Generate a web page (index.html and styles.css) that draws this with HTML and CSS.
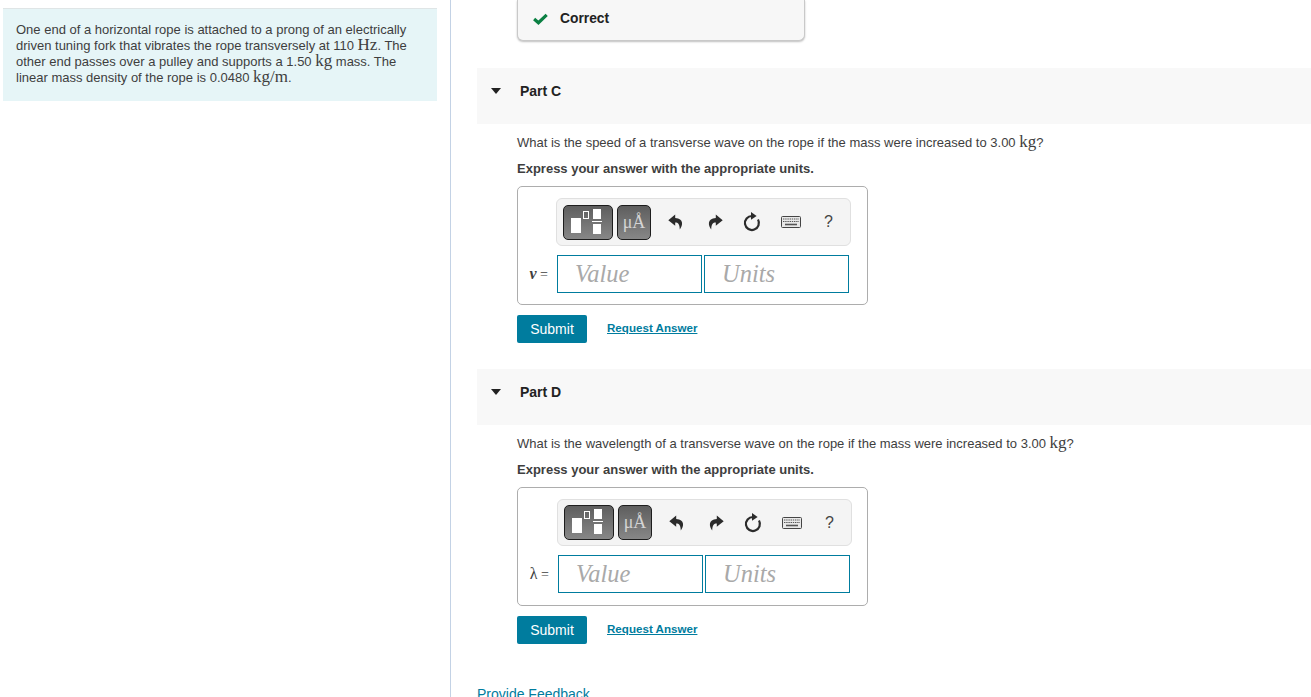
FILE: index.html
```html
<!DOCTYPE html>
<html lang="en">

<head>
    <meta charset="UTF-8">
    <title>Tuning Fork Rope</title>
    <link rel="stylesheet" href="styles.css">
</head>

<body>
    <svg class="icon-defs" width="0" height="0">
        <symbol id="ico-undo" viewBox="0 0 16 16">
            <path d="M7.2 0.5 L0.3 6.3 L7.2 11.8 V8.6 C10.2 8.6 11.6 10.2 11.8 15.5 C15 11.5 16 4.4 7.2 4 Z" />
        </symbol>
        <symbol id="ico-reset" viewBox="0 0 18 20">
            <path d="M9 4 A7 7 0 1 0 15 7.5" fill="none" stroke="#2b2b2b" stroke-width="2.2" />
            <path d="M8 0 L13.6 3.9 L8 7.8 Z" fill="#2b2b2b" />
        </symbol>
        <symbol id="ico-keyboard" viewBox="0 0 20 12">
            <rect x="0.5" y="0.5" width="19" height="11" rx="1" fill="#e8e8e8" stroke="#444" />
            <path d="M2 3h16M2 5.5h16" stroke="#555" stroke-width="1.2" stroke-dasharray="1.4 .8" />
            <path d="M4 8.5h12" stroke="#555" stroke-width="1.6" />
        </symbol>
    </svg>

    <div class="page">
        <aside class="intro-col">
            <div class="intro">
                One end of a horizontal rope is attached to a prong of an electrically<br>
                driven tuning fork that vibrates the rope transversely at 110 <span class="math">Hz</span>. The<br>
                other end passes over a pulley and supports a 1.50 <span class="math">kg</span> mass. The<br>
                linear mass density of the rope is 0.0480 <span class="math">kg/m</span>.
            </div>
        </aside>

        <main class="parts-col">
            <div class="correct-box">
                <svg class="check" viewBox="0 0 16 12" width="15" height="12">
                    <path d="M1.2 6 L5.8 10 L14.6 1.6" fill="none" stroke="#0b8043" stroke-width="3.4" />
                </svg>
                <span>Correct</span>
            </div>

            <section class="part part-c">
                <header class="part-head">
                    <span class="caret"></span>
                    <h2>Part C</h2>
                </header>
                <div class="part-body">
                    <p class="question">What is the speed of a transverse wave on the rope if the mass were increased to 3.00 <span class="math">kg</span>?</p>
                    <p class="hint">Express your answer with the appropriate units.</p>
                    <div class="answer-box">
                        <div class="toolbar">
                            <button class="tool-btn tool-templates" type="button">
                                <span class="sq-big"></span><span class="sq-small"></span>
                                <span class="frac"><i></i><b></b><i></i></span>
                            </button>
                            <button class="tool-btn tool-units" type="button">μÅ</button>
                            <svg class="ico ico-undo"><use href="#ico-undo" /></svg>
                            <svg class="ico ico-redo"><use href="#ico-undo" /></svg>
                            <svg class="ico-reset"><use href="#ico-reset" /></svg>
                            <svg class="ico-keyboard"><use href="#ico-keyboard" /></svg>
                            <span class="help">?</span>
                        </div>
                        <div class="inputs">
                            <label class="var-label"><em>v</em> =</label>
                            <input class="field" type="text" placeholder="Value">
                            <input class="field" type="text" placeholder="Units">
                        </div>
                    </div>
                    <div class="actions">
                        <button class="submit" type="button">Submit</button>
                        <a class="request" href="#">Request Answer</a>
                    </div>
                </div>
            </section>

            <section class="part part-d">
                <header class="part-head">
                    <span class="caret"></span>
                    <h2>Part D</h2>
                </header>
                <div class="part-body">
                    <p class="question">What is the wavelength of a transverse wave on the rope if the mass were increased to 3.00 <span class="math">kg</span>?</p>
                    <p class="hint">Express your answer with the appropriate units.</p>
                    <div class="answer-box">
                        <div class="toolbar">
                            <button class="tool-btn tool-templates" type="button">
                                <span class="sq-big"></span><span class="sq-small"></span>
                                <span class="frac"><i></i><b></b><i></i></span>
                            </button>
                            <button class="tool-btn tool-units" type="button">μÅ</button>
                            <svg class="ico ico-undo"><use href="#ico-undo" /></svg>
                            <svg class="ico ico-redo"><use href="#ico-undo" /></svg>
                            <svg class="ico-reset"><use href="#ico-reset" /></svg>
                            <svg class="ico-keyboard"><use href="#ico-keyboard" /></svg>
                            <span class="help">?</span>
                        </div>
                        <div class="inputs">
                            <label class="var-label"><em class="lambda">λ</em> =</label>
                            <input class="field" type="text" placeholder="Value">
                            <input class="field" type="text" placeholder="Units">
                        </div>
                    </div>
                    <div class="actions">
                        <button class="submit" type="button">Submit</button>
                        <a class="request" href="#">Request Answer</a>
                    </div>
                </div>
            </section>

            <a class="feedback" href="#">Provide Feedback</a>
        </main>
    </div>
</body>

</html>
```

FILE: styles.css
```css
* {
    box-sizing: border-box;
}

html,
body {
    margin: 0;
    height: 697px;
    overflow: hidden;
    background-color: white;
}

body {
    font-family: "Liberation Sans", Arial, sans-serif;
    font-size: 13px;
    color: #3e3e3e;
}

.icon-defs {
    display: block;
    height: 0;
}

.page {
    display: flex;
    height: 697px;
}

.math {
    font-family: "Liberation Serif", serif;
    font-size: 17px;
    line-height: 0;
}

/* left column */
.intro-col {
    width: 451px;
    flex-shrink: 0;
    height: 697px;
    padding: 8px 13px 0 3px;
    border-right: 1px solid #c3d2e5;
}

.intro {
    height: 93px;
    padding: 13px 13px 0;
    background-color: #e6f5f7;
    border-top: 1px solid #dfe5e6;
    line-height: 16px;
    white-space: nowrap;
}

/* right column */
.parts-col {
    flex: 1;
    min-width: 0;
    padding-left: 26px;
}

.correct-box {
    display: flex;
    align-items: center;
    gap: 12px;
    width: 288px;
    height: 41px;
    margin-left: 40px;
    margin-bottom: 27px;
    padding: 0 0 3px 15px;
    background-color: #f7f7f7;
    border: 1px solid #c9c9c9;
    border-top: none;
    border-radius: 0 0 6px 6px;
    box-shadow: 0 1px 2px rgba(0, 0, 0, 0.25);
    font-size: 13.8px;
    font-weight: bold;
    color: #222;
}

.part-head {
    display: flex;
    align-items: center;
    height: 56px;
    padding: 0 0 10px 14px;
    background-color: #f8f8f8;
}

.caret {
    width: 0;
    height: 0;
    border-left: 5.5px solid transparent;
    border-right: 5.5px solid transparent;
    border-top: 6px solid #222;
}

.part-head h2 {
    margin: 0 0 0 19px;
    font-size: 14px;
    font-weight: bold;
    color: #222;
}

.part-body {
    padding: 10px 0 0 40px;
}

.question {
    margin: 0;
    height: 26px;
    line-height: 17px;
}

.hint {
    margin: 0 0 9px;
    height: 17px;
    line-height: 17px;
    font-weight: bold;
}

.answer-box {
    width: 351px;
    height: 119px;
    padding: 11px 16px 0 38px;
    border: 1px solid #adadad;
    border-radius: 5px;
}

.toolbar {
    display: flex;
    align-items: center;
    width: 295px;
    height: 48px;
    padding: 0 0 0 6px;
    background-color: #f4f4f4;
    border: 1px solid #e0e0e0;
    border-radius: 6px;
}

.tool-btn {
    position: relative;
    height: 35px;
    padding: 0;
    background: linear-gradient(#5e5e5e, #878787);
    border: 1px solid #1d1d1d;
    border-radius: 5px;
}

.tool-templates {
    width: 50px;
    margin-right: 4px;
}

.tool-units {
    width: 34px;
    margin-right: 17px;
    font-family: "Liberation Serif", serif;
    font-size: 18px;
    color: #d4d4d4;
}

.sq-big,
.sq-small,
.frac {
    position: absolute;
}

.sq-big {
    left: 7px;
    top: 12px;
    width: 10px;
    height: 15px;
    background-color: white;
}

.sq-small {
    left: 19px;
    top: 5px;
    width: 6px;
    height: 8px;
    border: 1px solid white;
}

.frac {
    left: 29px;
    top: 3px;
    display: flex;
    flex-direction: column;
    gap: 2px;
    width: 8px;
}

.frac i {
    display: block;
    height: 10px;
    background-color: white;
}

.frac b {
    display: block;
    height: 1px;
    margin: 0 -1px;
    background-color: white;
}

.ico {
    width: 16px;
    height: 16px;
    fill: #2b2b2b;
    flex-shrink: 0;
}

.ico-undo {
    margin-right: 23px;
}

.ico-redo {
    margin-right: 20px;
    transform: scaleX(-1);
}

.ico-reset {
    width: 18px;
    height: 20px;
    margin-right: 20px;
    flex-shrink: 0;
}

.ico-keyboard {
    width: 20px;
    height: 12px;
    margin-right: 23px;
    flex-shrink: 0;
}

.help {
    font-size: 16px;
    color: #444;
}

.inputs {
    display: flex;
    align-items: center;
    margin-top: 9px;
    margin-left: -2px;
    gap: 2px;
}

.var-label {
    width: 39px;
    margin-left: -38px;
    padding-right: 7px;
    text-align: right;
    font-family: "Liberation Serif", serif;
    font-size: 14px;
}

.var-label em {
    font-size: 16px;
    font-weight: bold;
}

.var-label .lambda {
    font-style: normal;
    font-weight: normal;
}

.field {
    width: 145px;
    height: 38px;
    padding: 0 0 0 17px;
    border: 1px solid #007c9e;
    border-radius: 0;
    font-family: "Liberation Serif", serif;
    font-size: 24.5px;
    font-style: italic;
    outline: none;
}

.field::placeholder {
    color: #a9a9a9;
    opacity: 1;
}

.actions {
    display: flex;
    align-items: center;
    gap: 20px;
    margin-top: 10px;
}

.submit {
    width: 70px;
    height: 28px;
    padding: 0;
    background-color: #007c9e;
    border: none;
    border-radius: 2px;
    font-family: "Liberation Sans", Arial, sans-serif;
    font-size: 14px;
    color: white;
}

.request {
    margin-top: -4px;
    font-size: 11.6px;
    font-weight: bold;
    color: #007c9e;
}

.part-c {
    height: 301px;
}

.part-d .answer-box .toolbar {
    width: 295px;
    margin-left: 1px;
    height: 47px;
}

.part-d .inputs {
    margin-top: 9px;
    margin-left: -1px;
}

.feedback {
    display: block;
    margin-top: 42px;
    font-size: 14px;
    line-height: 16px;
    color: #007c9e;
    text-decoration: none;
}
```
